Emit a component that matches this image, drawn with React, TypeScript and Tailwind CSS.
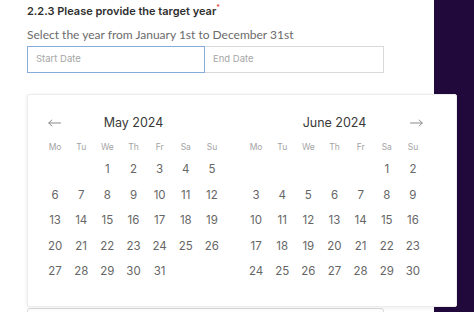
import React from 'react';

const WEEKDAYS = ['Mo', 'Tu', 'We', 'Th', 'Fr', 'Sa', 'Su'];

// leading blanks (monday first) and length of month
const MONTHS = [
  { title: 'May 2024', offset: 2, days: 31 },
  { title: 'June 2024', offset: 5, days: 30 },
];

function ArrowLeft() {
  return (
    <svg width="13" height="8" viewBox="0 0 13 8" fill="none" stroke="#8a8a8a" strokeWidth="1" strokeLinecap="round" strokeLinejoin="round">
      <path d="M12.5 4H0.8M3.8 1L0.8 4l3 3" />
    </svg>
  );
}

function ArrowRight() {
  return (
    <svg width="13" height="8" viewBox="0 0 13 8" fill="none" stroke="#8a8a8a" strokeWidth="1" strokeLinecap="round" strokeLinejoin="round">
      <path d="M0.5 4h11.7M9.2 1l3 3-3 3" />
    </svg>
  );
}

function Month({ title, offset, days, side }: { title: string; offset: number; days: number; side: 'left' | 'right' }) {
  const cells: (number | null)[] = [];
  for (let i = 0; i < offset; i++) cells.push(null);
  for (let d = 1; d <= days; d++) cells.push(d);

  return (
    <div className="w-[183px]">
      <div className="flex h-[22px] items-center justify-between">
        <div className="flex w-[20px] justify-start pl-[6px]">{side === 'left' && <ArrowLeft />}</div>
        <div className="text-[12.5px] text-[#3a3a3a]">{title}</div>
        <div className="flex w-[20px] justify-end pr-[3px]">{side === 'right' && <ArrowRight />}</div>
      </div>
      <div className="mt-[3px] grid h-[20px] grid-cols-7 items-center">
        {WEEKDAYS.map((w) => (
          <div key={w} className="text-center text-[8.5px] text-[#a3a3a3]">
            {w}
          </div>
        ))}
      </div>
      <div className="grid grid-cols-7">
        {cells.map((d, i) => (
          <div key={i} className="flex h-[25.5px] items-center justify-center text-[11.5px] text-[#666666]">
            {d ?? ''}
          </div>
        ))}
      </div>
    </div>
  );
}

export default function App() {
  return (
    <div className="relative flex h-[312px] w-[474px] overflow-hidden bg-white" style={{ fontFamily: 'Inter, "Noto Sans", sans-serif' }}>
      <div className="flex-1 px-[27px] pt-[3px]">
        <div className="text-[11px] font-semibold text-[#2f2f2f]">
          2.2.3 Please provide the target year<span className="align-super text-[7px] text-[#e0443a]">*</span>
        </div>
        <div className="mt-[6px] text-[12px] text-[#6b6b6b]" style={{ fontFamily: 'Lato, sans-serif' }}>
          Select the year from January 1st to December 31st
        </div>
        <div className="mt-[2px] flex w-[357px]">
          <div className="flex h-[27px] w-[178px] items-center border border-[#86acdc] px-[8px] text-[9.5px] text-[#a6a6a6]">Start Date</div>
          <div className="flex h-[27px] flex-1 items-center border border-l-0 border-[#d9d9d9] px-[8px] text-[9.5px] text-[#a6a6a6]">End Date</div>
        </div>
        <div className="mt-[235px] h-[27px] w-[357px] rounded-[3px] border border-[#dcdcdc]" />
      </div>
      <div className="w-[40px] bg-[#21093c]" />

      <div className="absolute left-[27px] top-[94px] flex h-[213px] w-[430px] gap-[18px] rounded-[2px] border border-[#ececec] bg-white pl-[14px] pt-[17px] shadow-[0_1px_4px_rgba(0,0,0,0.08)]">
        {MONTHS.map((m, i) => (
          <Month key={m.title} {...m} side={i === 0 ? 'left' : 'right'} />
        ))}
      </div>
    </div>
  );
}
